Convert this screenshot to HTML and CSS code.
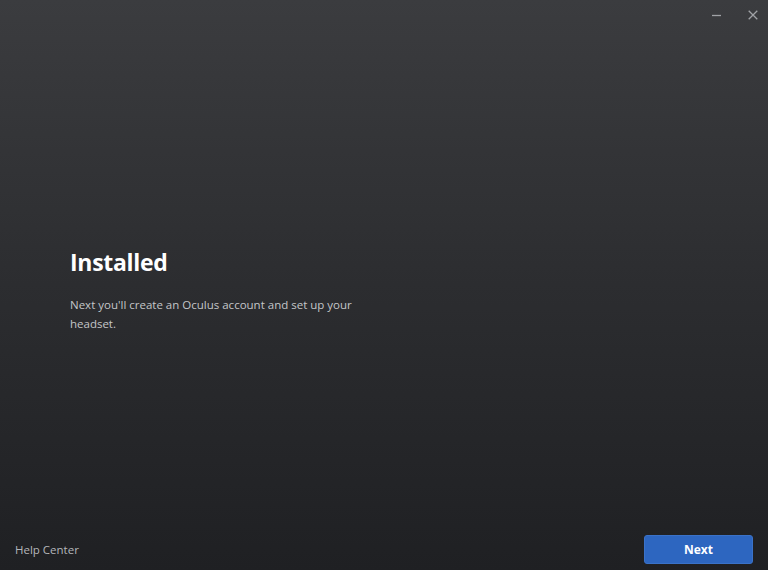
FILE: index.html
```html
<!DOCTYPE html>
<html lang="en">
<head>
    <meta charset="UTF-8">
    <meta name="viewport" content="width=device-width, initial-scale=1.0">
    <title>Oculus Setup</title>
    <link rel="stylesheet" href="styles.css">
</head>
<body>
    <div class="window">
        <div class="titlebar">
            <button class="win-btn" aria-label="Minimize">
                <svg width="9" height="10" viewBox="0 0 9 10"><path d="M0 5.5h9" stroke="#a0a2a6" stroke-width="1.3"/></svg>
            </button>
            <button class="win-btn" aria-label="Close">
                <svg width="10" height="10" viewBox="0 0 10 10"><path d="M0.7 0.7l8.6 8.6M9.3 0.7l-8.6 8.6" stroke="#a0a2a6" stroke-width="1.3"/></svg>
            </button>
        </div>

        <main class="content">
            <h1>Installed</h1>
            <p>Next you'll create an Oculus account and set up your headset.</p>
        </main>

        <footer class="footer">
            <a href="#" class="help">Help Center</a>
            <button class="next">Next</button>
        </footer>
    </div>
</body>
</html>
```

FILE: styles.css
```css
html, body {
    margin: 0;
    height: 100%;
}
body {
    font-family: "Open Sans", "Noto Sans", sans-serif;
    background: linear-gradient(to bottom, #3b3c3f 0%, #2c2d30 50%, #1f2023 100%);
    color: #fff;
    overflow: hidden;
}
.window {
    height: 570px;
    display: flex;
    flex-direction: column;
}
.titlebar {
    display: flex;
    justify-content: flex-end;
    gap: 27px;
    padding: 10px 10px 0 0;
}
.win-btn {
    background: none;
    border: none;
    padding: 0;
    height: 10px;
    display: flex;
    cursor: pointer;
}
.content {
    flex: 1;
    padding: 226px 0 0 70px;
}
h1 {
    margin: 0;
    font-size: 23px;
    font-weight: 700;
    line-height: 32px;
    letter-spacing: -0.3px;
}
p {
    margin: 17px 0 0;
    width: 295px;
    font-size: 11.5px;
    line-height: 19px;
    color: #c4c6c9;
}
.footer {
    display: flex;
    justify-content: space-between;
    align-items: center;
    padding: 0 15px 6px 15px;
}
.help {
    color: #b4b6ba;
    font-size: 11.5px;
    text-decoration: none;
}
.next {
    width: 109px;
    height: 29px;
    background-color: #2d66c0;
    border: 1px solid #3a72c8;
    border-radius: 3px;
    color: #fff;
    font-family: inherit;
    font-size: 12px;
    font-weight: 700;
    cursor: pointer;
}
```
